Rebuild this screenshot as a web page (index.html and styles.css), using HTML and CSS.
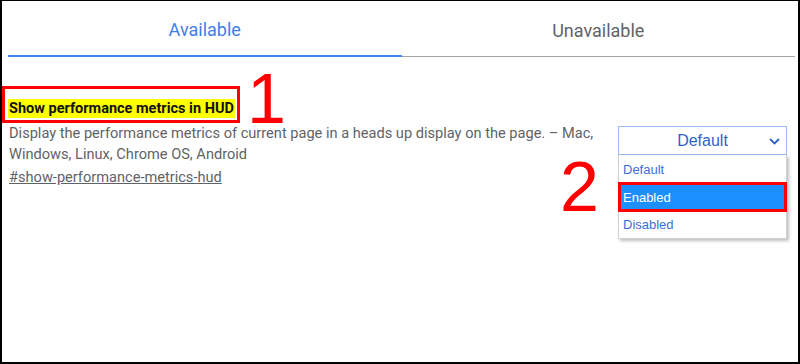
FILE: index.html
```html
<!DOCTYPE html>
<html>
<head>
<meta charset="utf-8">
<link rel="stylesheet" href="styles.css">
</head>
<body>
<div class="frame">
  <div class="tabs">
    <div class="tab tab-active">Available</div>
    <div class="tab">Unavailable</div>
  </div>
  <div class="experiment">
    <div class="title-row"><span class="title">Show performance metrics in HUD</span></div>
    <div class="row">
      <div class="desc">
        <p class="text">Display the performance metrics of current page in a heads up display on the page. – Mac, Windows, Linux, Chrome OS, Android</p>
        <a class="link">#show-performance-metrics-hud</a>
      </div>
      <div class="control">
        <div class="select">
          <span class="select-label">Default</span>
          <svg class="chevron" width="11" height="7" viewBox="0 0 11 7"><polyline points="1,1 5.5,5.5 10,1" fill="none" stroke="#2f62cf" stroke-width="1.8"/></svg>
        </div>
        <ul class="menu">
          <li class="option">Default</li>
          <li class="option option-selected">Enabled</li>
          <li class="option">Disabled</li>
        </ul>
      </div>
    </div>
  </div>
  <div class="mark-box"></div>
  <div class="num num-1">1</div>
  <div class="num num-2">2</div>
</div>
</body>
</html>
```
FILE: styles.css
```css
* { box-sizing: border-box; }
html, body { margin: 0; padding: 0; background: #fff; }
body { font-family: Roboto, "Liberation Sans", sans-serif; }

.frame {
  position: relative;
  width: 800px;
  height: 364px;
  border: 2px solid #000;
  border-top-width: 1px;
  background: #fff;
  overflow: hidden;
}

.tabs {
  display: flex;
  margin: 0 3px 0 6px;
  align-items: flex-end;
}
.tab {
  flex: 1;
  height: 56px;
  display: flex;
  align-items: center;
  justify-content: center;
  padding-top: 3px;
  font-size: 18px;
  color: #5f6368;
  border-bottom: 1px solid #a5a5a5;
}
.tab-active {
  color: #3f7ee8;
  border-bottom: 2px solid #4285f4;
  height: 56px;
}

.experiment {
  padding: 41px 11px 0 7px;
}
.title-row { margin-bottom: 5px; }
.title {
  display: inline-block;
  margin-left: -1px;
  padding: 0 1px;
  line-height: 19px;
  font-size: 14.5px;
  font-weight: 700;
  color: #111;
  background: #ffff00;
}

.row {
  display: flex;
  align-items: flex-start;
}
.desc { flex: 1; padding-right: 16px; }
.text {
  margin: 0;
  font-size: 14.6px;
  line-height: 21px;
  color: #5f6368;
}
.link {
  display: inline-block;
  margin-top: 2px;
  font-size: 14.6px;
  line-height: 21px;
  color: #5f6368;
  text-decoration: underline;
}

.control {
  position: relative;
  width: 169px;
  margin-top: 3px;
}
.select {
  position: relative;
  height: 29px;
  border: 1px solid #9bbcf2;
  display: flex;
  align-items: center;
  justify-content: center;
  font-family: "Liberation Sans", Arial, sans-serif;
  font-size: 16px;
  color: #2f62cf;
}
.chevron {
  position: absolute;
  right: 6px;
  top: 11px;
}
.menu {
  position: absolute;
  left: 0;
  top: 29px;
  width: 169px;
  margin: 0;
  padding: 0;
  list-style: none;
  background: #fff;
  border: 1px solid #d0d0d0;
  border-top: none;
  box-shadow: 2px 2px 3px rgba(0,0,0,0.25);
  font-family: "Liberation Sans", Arial, sans-serif;
  font-size: 13px;
  color: #3a6fd8;
}
.option {
  height: 28px;
  line-height: 29px;
  padding-left: 4px;
}
.option:last-child { height: 27px; line-height: 28px; }
.option-selected {
  background: #1e8fff;
  color: #fff;
  outline: 3px solid #f00;
  outline-offset: -2px;
}

.mark-box {
  position: absolute;
  left: 0;
  top: 85px;
  width: 238px;
  height: 37px;
  border: 3px solid #f00;
}
.num {
  position: absolute;
  font-family: "Liberation Sans", Arial, sans-serif;
  color: #f00;
  line-height: 0.8;
}
.num-1 { left: 245px; top: 70px; font-size: 70px; }
.num-2 { left: 558px; top: 158px; font-size: 70px; }
```
